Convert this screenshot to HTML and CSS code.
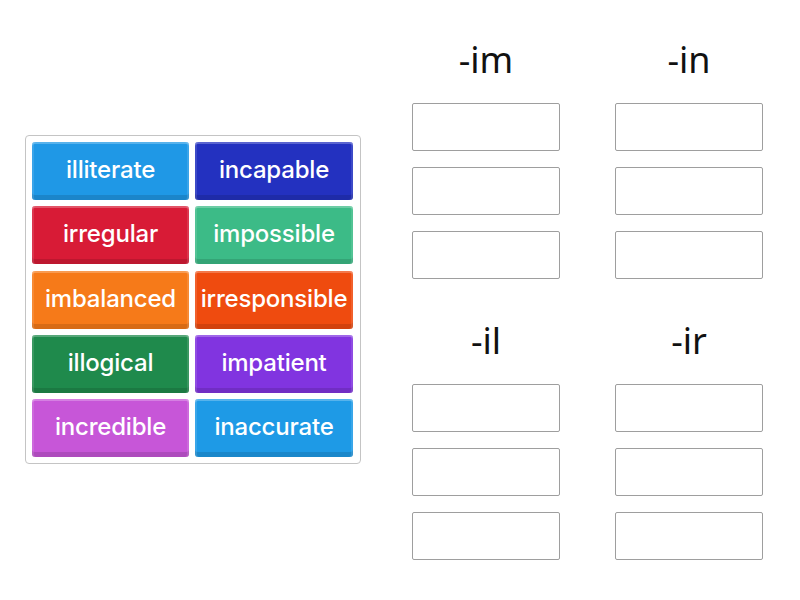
FILE: index.html
```html
<!DOCTYPE html>
<html>
<head>
<meta charset="utf-8">
<link rel="stylesheet" href="styles.css">
</head>
<body>
<div class="page">
  <div class="pool">
    <div class="tile c1">illiterate</div>
    <div class="tile c2">incapable</div>
    <div class="tile c3">irregular</div>
    <div class="tile c4">impossible</div>
    <div class="tile c5">imbalanced</div>
    <div class="tile c6">irresponsible</div>
    <div class="tile c7">illogical</div>
    <div class="tile c8">impatient</div>
    <div class="tile c9">incredible</div>
    <div class="tile c10">inaccurate</div>
  </div>
  <div class="groups">
    <div class="group">
      <div class="heading">-im</div>
      <div class="box"></div><div class="box"></div><div class="box"></div>
    </div>
    <div class="group">
      <div class="heading">-in</div>
      <div class="box"></div><div class="box"></div><div class="box"></div>
    </div>
    <div class="group">
      <div class="heading">-il</div>
      <div class="box"></div><div class="box"></div><div class="box"></div>
    </div>
    <div class="group">
      <div class="heading">-ir</div>
      <div class="box"></div><div class="box"></div><div class="box"></div>
    </div>
  </div>
</div>
</body>
</html>
```

FILE: styles.css
```css
html, body {
  margin: 0;
  padding: 0;
  background: #ffffff;
}
.page {
  width: 800px;
  height: 600px;
  display: flex;
  align-items: flex-start;
}
.pool {
  margin-top: 135px;
  margin-left: 25px;
  width: 322px;
  padding: 6px;
  border: 1px solid #c4c4c4;
  border-radius: 4px;
  display: grid;
  grid-template-columns: 157px 158px;
  grid-auto-rows: 58px;
  column-gap: 6px;
  row-gap: 6.25px;
}
.tile {
  border-radius: 3px;
  display: flex;
  align-items: center;
  justify-content: center;
  color: #ffffff;
  font-family: Inter, Lato, sans-serif;
  font-weight: 500;
  font-size: 24px;
  letter-spacing: -0.2px;
  box-shadow: inset 0 2px 0 rgba(255,255,255,0.25), inset 2px 0 0 rgba(255,255,255,0.12), inset -2px 0 0 rgba(255,255,255,0.12), inset 0 -5px 0 rgba(0,0,0,0.12);
  padding-bottom: 3px;
  box-sizing: border-box;
  white-space: nowrap;
}
.c1 { background: #1f98e6; }
.c2 { background: #2331c0; }
.c3 { background: #d81b36; }
.c4 { background: #3cbb87; }
.c5 { background: #f67a19; }
.c6 { background: #ef4b0f; }
.c7 { background: #1f8a4c; }
.c8 { background: #8134e0; }
.c9 { background: #c756d8; }
.c10 { background: #1e9ae6; }

.groups {
  margin-left: 51px;
  margin-top: 30px;
  display: grid;
  grid-template-columns: 148px 148px;
  column-gap: 55px;
  row-gap: 32px;
}
.group {
  display: flex;
  flex-direction: column;
  gap: 16px;
}
.heading {
  height: 60px;
  line-height: 60px;
  text-align: center;
  font-family: "Noto Sans", "Open Sans", sans-serif;
  font-size: 36px;
  color: #111111;
  margin-bottom: -3px;
}
.box {
  height: 48px;
  border: 1px solid #9e9e9e;
  border-radius: 2px;
  box-sizing: border-box;
  background: #ffffff;
}
```
